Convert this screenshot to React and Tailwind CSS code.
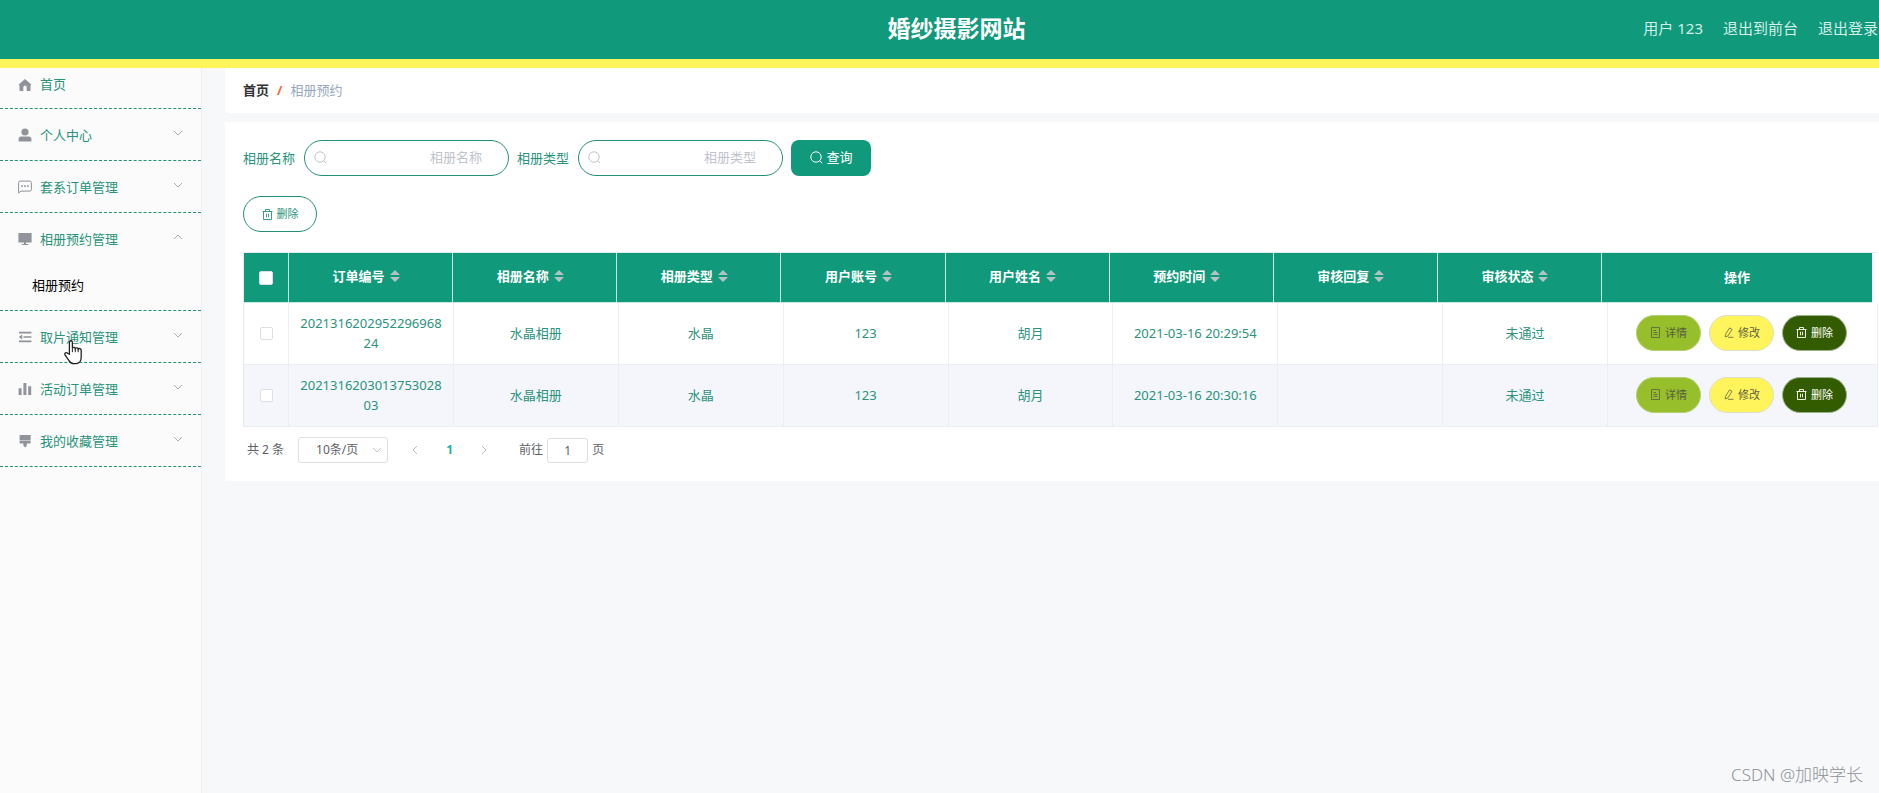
import { useState } from 'react'

const MENU = [
  { label: '个人中心', icon: 'user' },
  { label: '套系订单管理', icon: 'chat' },
  { label: '相册预约管理', icon: 'monitor', children: ['相册预约'] },
  { label: '取片通知管理', icon: 'fold' },
  { label: '活动订单管理', icon: 'bars' },
  { label: '我的收藏管理', icon: 'brush' },
]

const COLUMNS = ['订单编号', '相册名称', '相册类型', '用户账号', '用户姓名', '预约时间', '审核回复', '审核状态']

const ROWS = [
  ['202131620295229696824', '水晶相册', '水晶', '123', '胡月', '2021-03-16 20:29:54', '', '未通过'],
  ['202131620301375302803', '水晶相册', '水晶', '123', '胡月', '2021-03-16 20:30:16', '', '未通过'],
]

const MENU_ICONS = {
  home: <path fill="currentColor" d="M7 1 0.5 6.8 1.5 7.6V13H5.3V9.2a1.7 1.7 0 0 1 3.4 0V13h3.8V7.6l1-.8z" />,
  user: (
    <g fill="currentColor">
      <circle cx="7" cy="4" r="3.6" />
      <path d="M.6 13.5V11A2.5 2.5 0 0 1 3.1 8.5h7.8a2.5 2.5 0 0 1 2.5 2.5v2.5z" />
    </g>
  ),
  chat: (
    <g fill="none" stroke="currentColor">
      <path d="M.6 13V2.6A1.5 1.5 0 0 1 2.1 1.1h9.8a1.5 1.5 0 0 1 1.5 1.5v7a1.5 1.5 0 0 1-1.5 1.5H3z" />
      <path strokeWidth="1.6" d="M3.3 6.1h1.5M6.2 6.1h1.6M9.2 6.1h1.5" />
    </g>
  ),
  monitor: <path fill="currentColor" d="M.4 1h13.2v9.6H.4zM6 10.6h2v1.3h2.2v1.1H3.8v-1.1H6z" />,
  fold: (
    <g fill="currentColor">
      <path d="M1 1.8h12.4v1.6H1zM5.4 6.2h8v1.6h-8zM1 10.6h12.4v1.6H1z" />
      <path d="M4.2 4.6v4.8L.8 7z" />
    </g>
  ),
  bars: <path fill="currentColor" d="M.6 6.3h3V13h-3zM5.4 1h3v12h-3zM10.2 4.2h3V13h-3z" />,
  brush: <path fill="currentColor" d="M1.6 1h11v5.4h-11zM1.6 7.1h11v2.4H8.8v2.2L7.1 13.6l-1.7-1.9V9.5H1.6z" />,
}

function MenuIcon({ name }) {
  return (
    <svg width="14" height="14" viewBox="0 0 14 14" className="mt-px shrink-0 text-[#909399]">
      {MENU_ICONS[name]}
    </svg>
  )
}

function Chevron({ d, className }) {
  return (
    <svg width="10" height="10" viewBox="0 0 10 10" className={className} fill="none" stroke="currentColor">
      <path d={d} />
    </svg>
  )
}

function SearchIcon({ className }) {
  return (
    <svg width="13" height="13" viewBox="0 0 13 13" className={className} fill="none" stroke="currentColor">
      <circle cx="6" cy="6" r="5.2" />
      <path d="m9.6 9.8 2.6 2.3" />
    </svg>
  )
}

function TrashIcon() {
  return (
    <svg width="11" height="11" viewBox="0 0 11 11" fill="none" stroke="currentColor" strokeWidth="0.9">
      <path d="M.5 2.5h10M3.5 2.5v-2h4v2M1.5 2.5v8h8v-8M4.5 4.7v3.6M6.5 4.7v3.6" />
    </svg>
  )
}

function DetailIcon() {
  return (
    <svg width="11" height="11" viewBox="0 0 11 11" fill="none" stroke="currentColor" strokeWidth="0.8">
      <path d="M1.5 .5h8v10h-8zM3.5 3.5h2.5M3.5 5.5h4M3.5 7.5h4" />
    </svg>
  )
}

function EditIcon() {
  return (
    <svg width="11" height="11" viewBox="0 0 11 11" fill="none" stroke="currentColor" strokeWidth="0.8">
      <path d="M6.6.9 9 2.3 5 8.8 2.3 10l.2-2.7zM5 10.3h5.5" />
    </svg>
  )
}

function SearchField({ id, label }) {
  return (
    <div className="flex items-center gap-[9px]">
      <label htmlFor={id} className="text-[#2a937c]">{label}</label>
      <div className="relative">
        <SearchIcon className="absolute top-[11px] left-[10px] text-[#c0c4cc]" />
        <input
          id={id}
          placeholder={label}
          className="block h-9 w-[205px] rounded-full border border-[#248f77] bg-white pr-[26px] pb-[2px] pl-8 text-right outline-none placeholder:text-[#c0c4cc]"
        />
      </div>
    </div>
  )
}

function Sidebar() {
  const [open, setOpen] = useState('相册预约管理')

  return (
    <nav className="w-[202px] shrink-0 border-r border-[#efefef] bg-[#fbfbfb] text-[#2a937c]">
      <a href="#home" className="flex h-[41px] items-center gap-2 border-b border-dashed border-[#248f77] pb-2 pl-[18px]">
        <MenuIcon name="home" />
        首页
      </a>
      {MENU.map(item => (
        <div key={item.label} className="border-b border-dashed border-[#248f77]">
          <button
            onClick={() => setOpen(open === item.label ? null : item.label)}
            className="flex h-[51px] w-full items-center gap-2 pr-[18px] pl-[18px]"
          >
            <MenuIcon name={item.icon} />
            {item.label}
            <Chevron
              d={open === item.label ? 'M1 7l4-4 4 4' : 'M1 3l4 4 4-4'}
              className="mb-1 ml-auto text-[#a9acb2]"
            />
          </button>
          {open === item.label && item.children?.map(child => (
            <a key={child} href="#album" className="flex h-[46px] items-center pb-1 pl-8 text-black">{child}</a>
          ))}
        </div>
      ))}
    </nav>
  )
}

function TableCols() {
  return (
    <colgroup>
      <col className="w-[45px]" />
      {COLUMNS.map(c => <col key={c} />)}
      <col className="w-[270px]" />
    </colgroup>
  )
}

function DataTable() {
  const [checked, setChecked] = useState([false, false])
  const all = checked.every(Boolean)

  return (
    <div className="border-t border-l border-[#e4ebf0]">
      <div className="pr-[6px]">
        <table className="w-full table-fixed border-separate border-spacing-0 bg-[#10997a] text-white">
          <TableCols />
          <thead>
            <tr className="h-[50px]">
              <th className="border-r border-b border-[#c5ebe1]">
                <input
                  type="checkbox"
                  aria-label="全选"
                  checked={all}
                  onChange={() => setChecked([!all, !all])}
                  className="mx-auto block size-[14px] appearance-none rounded-xs border border-[#dcdfe6] bg-white checked:bg-[#a8d8cb]"
                />
              </th>
              {COLUMNS.map(c => (
                <th key={c} className="border-r border-b border-[#c5ebe1] pb-1 font-bold">
                  <div className="flex items-center justify-center pr-1">
                    {c}
                    <button aria-label={`${c}排序`} className="flex w-5 justify-center">
                      <svg width="10" height="12" viewBox="0 0 10 12" fill="#b4c2c4">
                        <path d="M5 0l5 5H0zM5 12l5-5H0z" />
                      </svg>
                    </button>
                  </div>
                </th>
              ))}
              <th className="border-b border-[#c5ebe1] pb-[2px] font-bold">操作</th>
            </tr>
          </thead>
        </table>
      </div>
      <table className="w-full table-fixed border-separate border-spacing-0 text-center text-[#2a937c]">
        <TableCols />
        <tbody>
          {ROWS.map((row, i) => (
            <tr key={row[0]} className="h-[62px] even:bg-[#f4f6fb]">
              <td className="border-r border-b border-[#ebeef5]">
                <input
                  type="checkbox"
                  aria-label={`选择 ${row[0]}`}
                  checked={checked[i]}
                  onChange={() => setChecked(checked.map((v, j) => (j === i ? !v : v)))}
                  className="mx-auto block size-[13px] appearance-none rounded-xs border border-[#dcdfe6] bg-white checked:bg-[#10997a]"
                />
              </td>
              {row.map((cell, j) => (
                <td key={j} className="border-r border-b border-[#ebeef5] px-[9px] pb-[2px] leading-5 break-all">{cell}</td>
              ))}
              <td className="border-r border-b border-[#ebeef5] pr-[2px] pb-[2px]">
                <div className="flex justify-center gap-2 text-[11px]">
                  <button className="flex h-9 w-[65px] items-center justify-center gap-1 rounded-full border border-[#b4cf6e] bg-[#97be2b] text-[#56603f]">
                    <DetailIcon />
                    详情
                  </button>
                  <button className="flex h-9 w-[65px] items-center justify-center gap-1 rounded-full border border-[#dcdfc6] bg-[#fff45c] text-[#606246]">
                    <EditIcon />
                    修改
                  </button>
                  <button className="flex h-9 w-[65px] items-center justify-center gap-1 rounded-full border border-[#9db388] bg-[#335c00] text-white">
                    <TrashIcon />
                    删除
                  </button>
                </div>
              </td>
            </tr>
          ))}
        </tbody>
      </table>
    </div>
  )
}

function Pagination() {
  return (
    <div className="flex items-center pt-[10px] pl-1 text-[12px] text-[#606266]">
      <span>共 2 条</span>
      <div className="relative ml-[14px]">
        <select
          aria-label="每页条数"
          className="block h-[26px] w-[90px] appearance-none rounded-[3px] border border-[#dcdfe6] bg-white pl-[17px] outline-none"
        >
          <option>10条/页</option>
          <option>20条/页</option>
        </select>
        <Chevron d="M1 3l4 4 4-4" className="pointer-events-none absolute top-2 right-[6px] text-[#c0c4cc]" />
      </div>
      <button aria-label="上一页" className="ml-[22px] text-[#b4bbc5]">
        <Chevron d="M7 1L3 5l4 4" />
      </button>
      <button className="w-[59px] font-bold text-[#16b5a4]">1</button>
      <button aria-label="下一页" className="text-[#b4bbc5]">
        <Chevron d="M3 1l4 4-4 4" />
      </button>
      <label className="ml-[30px] flex items-center gap-1">
        前往
        <input
          defaultValue="1"
          className="block h-[25px] w-[41px] rounded-[3px] border border-[#dcdfe6] bg-white text-center outline-none"
        />
        页
      </label>
    </div>
  )
}

export default function App() {
  return (
    <div className="relative flex min-h-screen flex-col bg-[#f6f8fa] font-['Noto_Sans','Noto_Sans_CJK_SC',sans-serif] text-[13px] leading-5">
      <header className="grid h-[68px] grid-cols-[1fr_auto_1fr] items-center border-b-[9px] border-[#fff45c] bg-[#10997a] pl-[34px] text-white">
        <h1 className="col-start-2 pb-1 text-[23px] leading-8 font-bold">婚纱摄影网站</h1>
        <div className="flex justify-end gap-5 pr-[1px] pb-1 text-[15px] text-[#d5efe8]">
          <span>用户 123</span>
          <a href="#front">退出到前台</a>
          <a href="#logout">退出登录</a>
        </div>
      </header>

      <div className="flex grow">
        <Sidebar />
        <main className="flex min-w-0 grow flex-col gap-[9px] pl-[23px]">
          <div className="flex h-[45px] items-center gap-2 rounded-bl bg-white pb-[2px] pl-[18px]">
            <a href="#home" className="font-bold text-[#303133]">首页</a>
            <span className="font-bold text-[#f4683c]">/</span>
            <span className="text-[#97a8be]">相册预约</span>
          </div>

          <section className="bg-white pt-[18px] pr-[1px] pb-[18px] pl-[18px]">
            <form className="flex items-center gap-2" onSubmit={e => e.preventDefault()}>
              <SearchField id="album-name" label="相册名称" />
              <SearchField id="album-type" label="相册类型" />
              <button className="flex h-9 w-20 items-center justify-center gap-1 rounded-lg bg-[#10997a] pb-[2px] text-white">
                <SearchIcon />
                查询
              </button>
            </form>
            <button className="my-5 flex h-9 w-[74px] items-center justify-center gap-1 rounded-full border border-[#248f77] text-[11px] text-[#2a937c]">
              <TrashIcon />
              删除
            </button>
            <DataTable />
            <Pagination />
          </section>
        </main>
      </div>

      <p className="absolute right-4 bottom-2 text-[17px] font-light text-[#8e9095]">CSDN @加映学长</p>

      {/* Hand pointer */}
      <svg width="19" height="25" viewBox="0 0 19 25" className="pointer-events-none absolute top-[340px] left-[64px]">
        <path
          d="M5.4 14.2V2.4c0-2.2 3-2.2 3 0v5.8c.4-1.3 2.7-1.2 2.9.3.5-1.1 2.7-.9 2.9.6.6-1 3-.7 3 1.3v6.6c0 3.8-1.6 6.6-5.4 6.6H9.6c-2.4 0-3.6-1.2-4.6-3L1 14.9c-.9-1.9 1.4-2.9 2.6-1.7z"
          fill="#fff"
          stroke="#222"
          strokeWidth="1.3"
        />
        <path d="M8.4 8.2v4M11.3 8.6v3.6M14.2 9.2v3" stroke="#222" />
      </svg>
    </div>
  )
}
